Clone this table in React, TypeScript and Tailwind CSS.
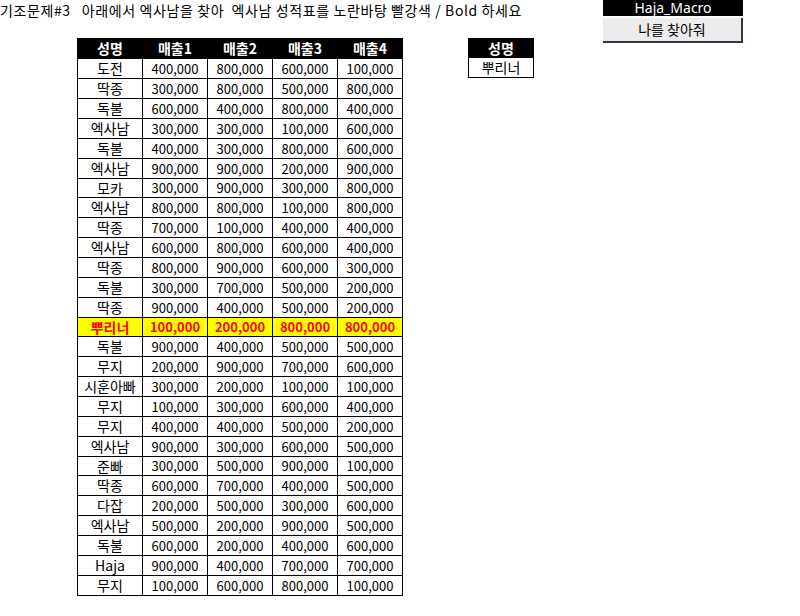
import React from "react";

const rows: [string, string, string, string, string][] = [
  ["도전", "400,000", "800,000", "600,000", "100,000"],
  ["딱종", "300,000", "800,000", "500,000", "800,000"],
  ["독불", "600,000", "400,000", "800,000", "400,000"],
  ["엑사남", "300,000", "300,000", "100,000", "600,000"],
  ["독불", "400,000", "300,000", "800,000", "600,000"],
  ["엑사남", "900,000", "900,000", "200,000", "900,000"],
  ["모카", "300,000", "900,000", "300,000", "800,000"],
  ["엑사남", "800,000", "800,000", "100,000", "800,000"],
  ["딱종", "700,000", "100,000", "400,000", "400,000"],
  ["엑사남", "600,000", "800,000", "600,000", "400,000"],
  ["딱종", "800,000", "900,000", "600,000", "300,000"],
  ["독불", "300,000", "700,000", "500,000", "200,000"],
  ["딱종", "900,000", "400,000", "500,000", "200,000"],
  ["뿌리너", "100,000", "200,000", "800,000", "800,000"],
  ["독불", "900,000", "400,000", "500,000", "500,000"],
  ["무지", "200,000", "900,000", "700,000", "600,000"],
  ["시훈아빠", "300,000", "200,000", "100,000", "100,000"],
  ["무지", "100,000", "300,000", "600,000", "400,000"],
  ["무지", "400,000", "400,000", "500,000", "200,000"],
  ["엑사남", "900,000", "300,000", "600,000", "500,000"],
  ["준빠", "300,000", "500,000", "900,000", "100,000"],
  ["딱종", "600,000", "700,000", "400,000", "500,000"],
  ["다잡", "200,000", "500,000", "300,000", "600,000"],
  ["엑사남", "500,000", "200,000", "900,000", "500,000"],
  ["독불", "600,000", "200,000", "400,000", "600,000"],
  ["Haja", "900,000", "400,000", "700,000", "700,000"],
  ["무지", "100,000", "600,000", "800,000", "100,000"],
];

const headers = ["성명", "매출1", "매출2", "매출3", "매출4"];

const font = { fontFamily: '"Noto Sans CJK KR", "Noto Sans", sans-serif' };

export default function App() {
  return (
    <div
      className="relative w-[800px] h-[616px] bg-white text-black overflow-hidden"
      style={font}
    >
      <div className="h-[38px] pl-0 text-[14px] tracking-[0.6px] leading-[20px] whitespace-pre">
        {"기조문제#3   아래에서 엑사남을 찾아  엑사남 성적표를 노란바탕 빨강색 / Bold 하세요"}
      </div>

      <div className="flex items-start pl-[77px] gap-[65px]">
        <div className="grid grid-cols-[64px_64px_64px_64px_64px] gap-px bg-black border border-black">
          {headers.map((h) => (
            <div
              key={h}
              className="h-[19px] bg-black text-white font-bold text-[14px] leading-[19px] text-center"
            >
              {h}
            </div>
          ))}
          {rows.map((r, i) => {
            const hl = i === 13;
            const short = i % 7 === 6;
            return r.map((c, j) => (
              <div
                key={`${i}-${j}`}
                className={
                  (short ? "h-[18px] leading-[18px] " : "h-[19px] leading-[19px] ") +
                  (hl
                    ? "bg-[#ffff00] text-[#ff0000] font-bold "
                    : "bg-white text-black ") +
                  (j === 0 ? "text-[14px] " : "text-[13px] ") +
                  "text-center"
                }
              >
                {c}
              </div>
            ));
          })}
        </div>

        <div className="grid grid-cols-[64px] gap-px bg-black border border-black">
          <div className="h-[18px] bg-black text-white font-bold text-[14px] leading-[18px] text-center">
            성명
          </div>
          <div className="h-[19px] bg-white text-[14px] leading-[19px] text-center">
            뿌리너
          </div>
        </div>
      </div>

      <div className="absolute left-[603px] top-0 w-[140px] flex flex-col">
        <div className="h-[16px] bg-black text-white font-['Noto_Sans',sans-serif] text-[14px] leading-[15px] text-center">
          Haja_Macro
        </div>
        <div className="h-[2px] bg-white" />
        <div className="h-[25px] bg-[#ececec] border-r-2 border-b-2 border-[#3a3448] text-[14px] leading-[23px] text-center">
          나를 찾아줘
        </div>
      </div>
    </div>
  );
}
